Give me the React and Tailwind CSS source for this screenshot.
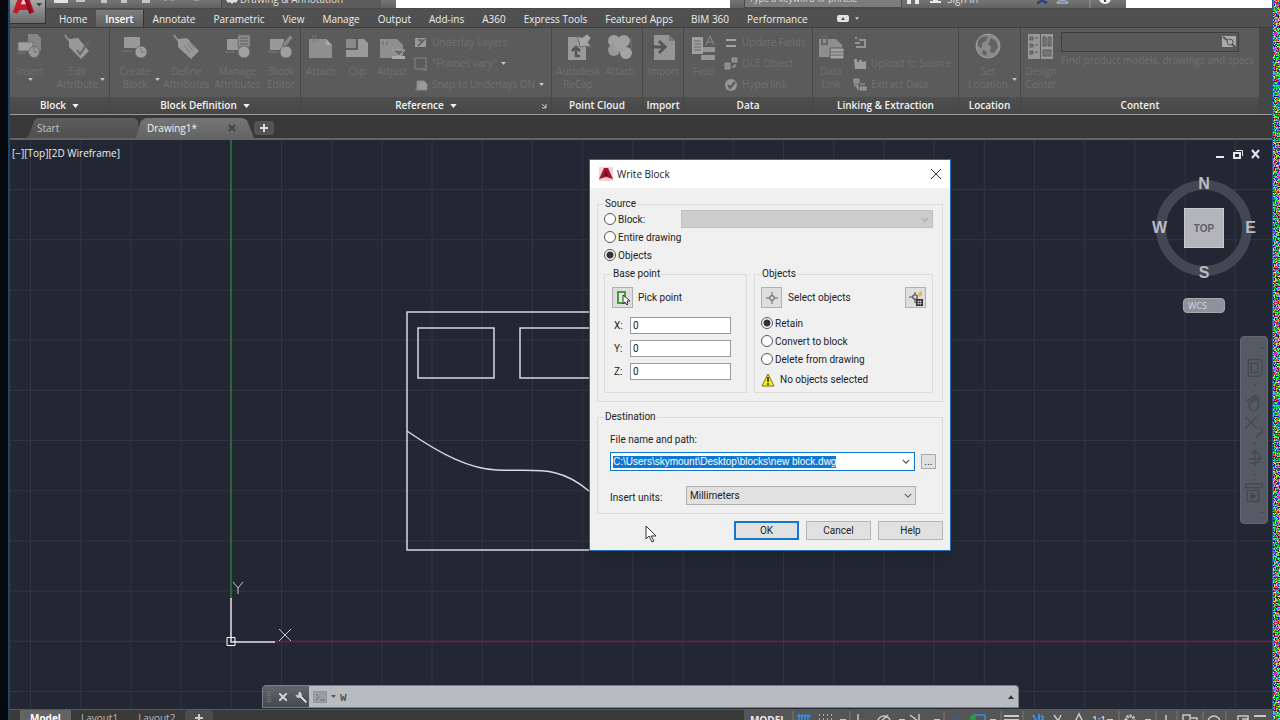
import React, { useEffect, useRef, useState } from "react";
import clsx from "clsx";

const MENU_TABS = [
  "Home",
  "Insert",
  "Annotate",
  "Parametric",
  "View",
  "Manage",
  "Output",
  "Add-ins",
  "A360",
  "Express Tools",
  "Featured Apps",
  "BIM 360",
  "Performance",
];

// Shapes of the large (28px) ribbon icons
const SHAPES = {
  insert: (
    <>
      <path d="M12 1h9l4 4v13H12z" fill="#858585" />
      <path d="M2 9h15v9H2z" fill="#a0a0a0" stroke="#6e6e6e" />
      <circle cx="18" cy="19" r="5.5" fill="#999" stroke="#6e6e6e" />
      <path d="M1 20h8M18 14v5h4" stroke="#777" fill="none" />
    </>
  ),
  editTag: (
    <>
      <path d="M1 2c2 4 3 4 5 6" stroke="#8c8c8c" strokeWidth="2" fill="none" />
      <path d="M5 6l9-1 11 13-8 8L5 14z" fill="#999" />
      <path d="M13 17l3 4 9-13" stroke="#666" strokeWidth="2" fill="none" />
    </>
  ),
  create: (
    <>
      <path d="M3 4h16v11H3z" fill="#999" />
      <circle cx="20" cy="19" r="6" fill="#a0a0a0" stroke="#6a6a6a" />
      <path d="M1 18h10M20 15v4h4" stroke="#7a7a7a" fill="none" />
    </>
  ),
  tag: (
    <>
      <path d="M1 2c2 4 3 4 5 6" stroke="#8c8c8c" strokeWidth="2" fill="none" />
      <path d="M5 6l9-1 12 13-8 8L5 14z" fill="#999" />
      <path d="M11 12l6 8M14 10l6 8M17 9l5 7" stroke="#777" />
    </>
  ),
  manage: (
    <>
      <path d="M3 6h12v11H3z" fill="#999" />
      <path d="M14 2h12v12H14z" fill="#8e8e8e" stroke="#6a6a6a" />
      <path d="M16 5h8M16 8h8M16 11h8" stroke="#5e5e5e" />
      <circle cx="20" cy="19" r="6" fill="#a0a0a0" stroke="#6a6a6a" />
      <path d="M1 19h10" stroke="#7a7a7a" />
    </>
  ),
  editor: (
    <>
      <path d="M3 6h14v11H3z" fill="#999" />
      <circle cx="19" cy="19" r="6" fill="#a0a0a0" stroke="#6a6a6a" />
      <path d="M15 12l8-10 3 3-8 9z" fill="#888" stroke="#666" />
      <path d="M1 19h10" stroke="#7a7a7a" />
    </>
  ),
  attach: (
    <>
      <path d="M2 6h17l6 6v13H2z" fill="#8f8f8f" />
      <path d="M19 6v6h6" fill="#aaa" />
      <path d="M6 10V2M9 10V2" stroke="#7c7c7c" />
    </>
  ),
  clip: (
    <>
      <path d="M3 6h10v9H3z" fill="#8a8a8a" />
      <path d="M15 6h6l4 4v14H3v-7h12z" fill="#9a9a9a" />
    </>
  ),
  adjust: (
    <>
      <path d="M2 6h17l6 6v13H2z" fill="#8f8f8f" />
      <path d="M5 8v4M9 8v4" stroke="#6a6a6a" />
      <path d="M14 17h13l-6 6z" fill="#6a6a6a" stroke="#aaa" />
      <path d="M14 23h13v3H14z" fill="#aaa" />
    </>
  ),
  recap: (
    <>
      <path d="M4 4h18v23H4z" fill="#9a9a9a" />
      <path d="M13 3l5 2 5-4 4 4-3 4 3 5-6-1-5 1-1-5z" fill="#a6a6a6" stroke="#6c6c6c" />
      <path d="M16 23h-4v-7M8 18l4-4 4 4" stroke="#555" strokeWidth="2.500" fill="none" />
    </>
  ),
  cloud: (
    <>
      <circle cx="8" cy="8" r="6" fill="#a0a0a0" />
      <circle cx="18" cy="8" r="6" fill="#a0a0a0" />
      <circle cx="8" cy="17" r="6" fill="#989898" />
      <circle cx="20" cy="20" r="6" fill="#a4a4a4" />
      <path d="M8 6h12v12H8z" fill="#a0a0a0" />
      <path d="M25 4v12" stroke="#777" />
    </>
  ),
  import: (
    <>
      <path d="M5 2h15l6 6v19H5z" fill="#959595" />
      <path d="M20 2v6h6" fill="#777" />
      <path d="M1 14h13M10 8l6 6-6 6" stroke="#555" strokeWidth="3" fill="none" />
    </>
  ),
  field: (
    <>
      <path d="M2 4h11v17H2z" fill="#a0a0a0" />
      <path d="M4 8h7M4 11h7M4 14h7M4 17h7" stroke="#666" />
      <path d="M16 12l4-9 4 9M17 9h6" stroke="#8a8a8a" fill="none" />
      <path d="M13 14h12v5H13zM11 22h14v5H11z" fill="#969696" />
    </>
  ),
  dataLink: (
    <>
      <path d="M2 6h17l6 6v12H2z" fill="#8f8f8f" />
      <path d="M5 11V4a3 3 0 0 1 5 0v7z" fill="none" stroke="#666" strokeWidth="2" />
      <path d="M13 15h14v11H13z" fill="#a4a4a4" stroke="#5a5a5a" />
      <path d="M13 19h14M13 22h14" stroke="#666" />
    </>
  ),
  globe: (
    <>
      <circle cx="14" cy="13" r="12" fill="#8a8a8a" stroke="#9c9c9c" />
      <path d="M5 6c4-3 7-3 9-2l-2 4-4 2v5l-3-1c-2-3-1-6 0-8zM17 5l5 3 2 6-4 6-4-1 1-5-3-3zM9 17l4 2-1 4-4-2z" fill="#626262" />
    </>
  ),
  design: (
    <>
      <path d="M1 1h12v25H1zM14 1h12v25H14z" fill="#979797" />
      <path d="M3 4h3v3H3zM8 5h3M3 11h3v3H3zM8 12h3M3 18h3v3H3zM8 19h3M16 4h3v9h-3zM21 4h3v9h-3zM16 17h8v6h-8z" fill="#777" stroke="#5c5c5c" />
    </>
  ),
};

// Small (14px) icons that stand before the ribbon's row commands
const ROW_SHAPES = {
  layers: (
    <>
      <path d="M1 2h11v9H1z" fill="#999" />
      <path d="M4 10l7-7M4 4h3v3" stroke="#5e5e5e" strokeWidth="1.500" fill="none" />
    </>
  ),
  frame: <path d="M1 1h11v11H1zM9 13h4" fill="none" stroke="#858585" />,
  snap: <path d="M3 3h7l3 3v6H3zM1 12h3" fill="#999" stroke="#888" />,
  update: <path d="M2 4h10M2 10h10" stroke="#a2a2a2" strokeWidth="2" />,
  ole: <path d="M1 6h5v6H1zM8 1h5v4H8zM8 10h3V7" fill="#8b8b8b" stroke="#999" />,
  hyper: (
    <>
      <circle cx="7" cy="7" r="6" fill="#979797" />
      <path d="M4 7l2 3 5-6" stroke="#5a5a5a" strokeWidth="2" fill="none" />
    </>
  ),
  download: <path d="M2 2h2M6 4h6v7H3M7 7H2" stroke="#959595" strokeWidth="2" fill="none" />,
  upload: <path d="M1 2h3v3h2V3h3v2l4-1v8H2z" fill="#9c9c9c" />,
  extract: <path d="M1 1h5v4H1zM1 7h4v5M7 6h5M7 9h6v3H7z" fill="#858585" stroke="#a0a0a0" />,
};

function Caret({ className }) {
  return (
    <svg viewBox="0 0 8 5" className={clsx("shrink-0", className)} fill="currentColor">
      <path d="M0 0h8L4 5z" />
    </svg>
  );
}

function Chevron({ className }) {
  return (
    <svg
      viewBox="0 0 10 6"
      className={clsx("w-2 h-[5px] pointer-events-none", className)}
      fill="none"
      stroke="currentColor"
      strokeWidth="1.500"
    >
      <path d="M1 1l4 4 4-4" />
    </svg>
  );
}

function BigButton({ icon, lines, className, caret }) {
  return (
    <button
      disabled
      className={clsx(
        "relative flex flex-col items-center shrink-0 pt-px text-[#707070] text-[10px] leading-[13px]",
        className
      )}
    >
      <svg viewBox="0 0 28 28" className="w-7 h-7 mb-1">
        {SHAPES[icon]}
      </svg>
      {lines.map((line) => (
        <span key={line} className="whitespace-nowrap">
          {line}
        </span>
      ))}
      {caret === "below" && <Caret className="w-[5px] h-[3px] text-[#c4c4c4]" />}
      {caret === "side" && (
        <Caret className="absolute right-0 bottom-4 w-[5px] h-[3px] text-[#c4c4c4]" />
      )}
    </button>
  );
}

function RowButton({ icon, label, caret }) {
  return (
    <button
      disabled
      aria-label={label || "Download"}
      className="flex items-center gap-1 h-[21px] text-[#707070] text-[10px] whitespace-nowrap"
    >
      <svg viewBox="0 0 14 14" className="w-[14px] h-[14px] shrink-0">
        {ROW_SHAPES[icon]}
      </svg>
      {label}
      {caret && <Caret className="w-[5px] h-[3px] text-[#c4c4c4]" />}
    </button>
  );
}

function Panel({ title, caret, launcher, className, children }) {
  return (
    <section
      className={clsx(
        "flex flex-col border-r border-[#464646] shadow-[inset_1px_0_0_#666] min-w-0",
        className
      )}
    >
      <div className="flex h-[69px] pt-1 bg-[#5b5b5b]">{children}</div>
      <div className="relative flex items-center justify-center gap-[6px] h-[17px] bg-linear-to-b from-[#4f4f4f] to-[#474747] text-[#f2f2f2] text-[10px] font-semibold whitespace-nowrap">
        {title}
        {caret && <Caret className="w-[7px] h-1" />}
        {launcher && (
          <svg viewBox="0 0 6 6" className="absolute right-1 w-[6px] h-[6px]" stroke="#ccc" fill="none">
            <path d="M1 1l4 4M5 1v4H1" />
          </svg>
        )}
      </div>
    </section>
  );
}

function TitleBar() {
  return (
    <header className="flex items-end h-2 overflow-hidden bg-linear-to-b from-[#757575] to-[#626262] text-[10px] leading-4 text-[#dedede]">
      <div className="flex items-end w-[211px] pl-11 h-2 shrink-0">
        <svg viewBox="0 0 160 8" className="w-40 h-2 shrink-0" fill="#e4e4e4">
          <path d="M0 0h14v3H0z" />
          <path d="M22 0h9v2h-9zM47 0h6v3h-6zM67 0h6v3h-6zM88 0h8v3h-8z" fill="#c4c4c4" />
          <path d="M110 0h3v1h-3zM117 0h3v1h-3zM140 0h5v1h-5z" fill="#999" />
        </svg>
      </div>
      <div className="flex items-end gap-[2px] w-[160px] h-2 shrink-0 border-l border-[#4a4a4a] bg-[#5c5c5c] pl-1">
        <svg viewBox="0 0 12 12" className="w-3 h-3 mb-1" fill="#ddd">
          <path d="M6 1l4 3 2 4-2 3-2-1-2 2-2-2-2 1-2-3 2-4z" />
        </svg>
        <span className="whitespace-nowrap mb-px">Drawing &amp; Annotation</span>
      </div>
      <div className="w-[5px] shrink-0" />
      <div className="w-[344px] h-2 pl-[10px] shrink">
        <div className="h-2 bg-white" />
      </div>
      <div className="w-[14px] shrink-0" />
      <div className="flex items-end w-[158px] h-2 shrink-0 bg-[#7c7c7c] border-b border-x border-[#4a4a4a] pl-1 text-[#d8d8d8]">
        <span className="text-[9px] whitespace-nowrap">Type a keyword or phrase</span>
      </div>
      <svg viewBox="0 0 45 8" className="w-[45px] h-2 shrink-0" fill="#e8e8e8">
        <path d="M5 0h4v4H5zM13 0h4v4h-4zM28 1h11v2H28zM31 0h5v1h-5z" />
      </svg>
      <span className="w-[90px] shrink-0 mb-px">Sign In</span>
      <svg viewBox="0 0 89 8" className="w-[89px] h-2 shrink-0">
        <path d="M0 3l9-5M1-2l9 5" stroke="#2c3e86" strokeWidth="3" />
        <path d="M20 3c0-3 11-3 11 0z" stroke="#c9d2e6" strokeWidth="1" fill="#4d5f9c" />
        <path d="M53 0v8" stroke="#999" />
        <circle cx="68" cy="-2" r="6" fill="#f1f1f1" />
        <path d="M68-3v5" stroke="#444" strokeWidth="2" />
      </svg>
      <div className="flex-1 h-2 bg-white" />
    </header>
  );
}

function MenuTabs() {
  return (
    <nav className="flex h-5 pt-px pl-10 bg-[#505050] border-t border-b border-t-[#494949] border-b-[#3d3d3d]">
      {MENU_TABS.map((tab) => (
        <button
          key={tab}
          className={clsx(
            "px-[9px] text-[10px] leading-[14px] whitespace-nowrap",
            tab === "Insert"
              ? "bg-linear-to-b from-[#7d7d7d] to-[#5f5f5f] border-r border-[#333] text-white font-semibold"
              : "text-[#eee]"
          )}
        >
          {tab}
        </button>
      ))}
      <button aria-label="Ribbon options" className="flex items-center gap-[6px] ml-5 text-[#d8d8d8]">
        <svg viewBox="0 0 12 7" className="w-3 h-[7px]">
          <rect width="12" height="7" rx="2" fill="#e0e0e0" />
          <path d="M4 5l2-3 2 3z" fill="#555" />
        </svg>
        <Caret className="w-1 h-[3px]" />
      </button>
    </nav>
  );
}

function Ribbon() {
  return (
    <div className="flex bg-[#464646] border-b border-[#9a9a9a]">
      <Panel title="Block" caret className="w-[100px] shrink-0">
        <BigButton icon="insert" lines={["Insert"]} caret="below" className="w-10" />
        <BigButton icon="editTag" lines={["Edit", "Attribute"]} caret="side" className="w-[55px]" />
      </Panel>
      <Panel title="Block Definition" caret className="w-[191px] shrink-0">
        <BigButton icon="create" lines={["Create", "Block"]} caret="side" className="w-[50px]" />
        <BigButton icon="tag" lines={["Define", "Attributes"]} className="w-[53px]" />
        <BigButton icon="manage" lines={["Manage", "Attributes"]} className="w-[49px]" />
        <BigButton icon="editor" lines={["Block", "Editor"]} className="w-[38px]" />
      </Panel>
      <Panel title="Reference" caret launcher className="w-[251px] shrink-0">
        <BigButton icon="attach" lines={["Attach"]} className="w-10" />
        <BigButton icon="clip" lines={["Clip"]} className="w-8" />
        <BigButton icon="adjust" lines={["Adjust"]} className="w-[38px]" />
        <div className="flex flex-col pl-[3px]">
          <RowButton icon="layers" label="Underlay Layers" />
          <RowButton icon="frame" label={'"Frames vary"'} caret />
          <RowButton icon="snap" label="Snap to Underlays ON" caret />
        </div>
      </Panel>
      <Panel title="Point Cloud" className="w-[91px] shrink-0">
        <BigButton icon="recap" lines={["Autodesk", "ReCap"]} className="w-[52px]" />
        <BigButton icon="cloud" lines={["Attach"]} className="w-8" />
      </Panel>
      <Panel title="Import" className="w-[41px] shrink-0">
        <BigButton icon="import" lines={["Import"]} className="w-10" />
      </Panel>
      <Panel title="Data" className="w-[129px] shrink-0">
        <BigButton icon="field" lines={["Field"]} className="w-10" />
        <div className="flex flex-col">
          <RowButton icon="update" label="Update Fields" />
          <RowButton icon="ole" label="OLE Object" />
          <RowButton icon="hyper" label="Hyperlink" />
        </div>
      </Panel>
      <Panel title="Linking & Extraction" className="w-[146px] shrink-0">
        <BigButton icon="dataLink" lines={["Data", "Link"]} className="w-9" />
        <div className="flex flex-col pl-1 overflow-hidden">
          <RowButton icon="download" label="" />
          <RowButton icon="upload" label="Upload to Source" />
          <RowButton icon="extract" label="Extract  Data" />
        </div>
      </Panel>
      <Panel title="Location" className="w-[62px] shrink-0">
        <BigButton icon="globe" lines={["Set", "Location"]} caret="side" className="w-[58px]" />
      </Panel>
      <Panel title="Content" className="flex-1 mr-3">
        <BigButton icon="design" lines={["Design", "Center"]} className="w-10" />
        <div className="flex-1 min-w-0 overflow-hidden text-[10px] text-[#707070]">
          <div className="flex items-center h-5 mr-5 border border-[#3f3f3f] bg-[#595959]">
            <input aria-label="Search content" disabled className="flex-1 min-w-0 h-full" />
            <svg viewBox="0 0 14 12" className="w-[14px] h-3 mr-[2px]">
              <path d="M0 0h14v11H0z" fill="#aaa" />
              <circle cx="8" cy="6" r="3" fill="none" stroke="#555" />
              <path d="M1 1l4 3M10 8l4 4" stroke="#555" strokeWidth="2" />
            </svg>
          </div>
          <p className="whitespace-nowrap leading-4">Find product models, drawings and specs</p>
        </div>
      </Panel>
    </div>
  );
}

function FileTabs() {
  return (
    <div className="flex items-end h-[25px] pl-4 bg-[#383838] border-b-2 border-[#636363] text-[10px]">
      <button className="h-5 w-[114px] pl-[11px] text-left text-[#c4c4c4] bg-linear-to-b from-[#5d5d5d] to-[#4e4e4e] [clip-path:polygon(0_100%,3%_80%,7%_15%,10%_0,94%_0,98%_10%,100%_100%)]">
        Start
      </button>
      <div className="flex items-center h-5 w-[118px] -ml-1 pl-[11px] pr-[18px] bg-linear-to-b from-[#757575] to-[#646464] [clip-path:polygon(0_100%,4%_15%,8%_0,90%_0,94%_10%,100%_100%)]">
        <button className="flex-1 text-left text-[#f4f4f4]">Drawing1*</button>
        <button aria-label="Close Drawing1" className="text-[#454545]">
          <svg viewBox="0 0 8 8" className="w-2 h-2" stroke="currentColor" strokeWidth="2">
            <path d="M1 1l6 6M7 1L1 7" />
          </svg>
        </button>
      </div>
      <button
        aria-label="New drawing"
        className="flex items-center justify-center w-5 h-[14px] mb-[3px] rounded bg-[#555] text-[#ddd]"
      >
        <svg viewBox="0 0 8 8" className="w-2 h-2" stroke="currentColor" strokeWidth="2">
          <path d="M4 0v8M0 4h8" />
        </svg>
      </button>
    </div>
  );
}

function Drawing() {
  return (
    <svg className="absolute inset-0 w-full h-full" fill="none">
      <defs>
        <pattern id="grid" x="20" y="49" width="50.2" height="50.2" patternUnits="userSpaceOnUse">
          <path d="M.5 0v51M0 .5h51" stroke="#2f3542" />
        </pattern>
      </defs>
      <rect width="100%" height="100%" fill="url(#grid)" />
      <path d="M221 0v460" stroke="#2c7a35" strokeWidth="1.500" />
      <path d="M265 501.500h1010" stroke="#7a1c42" strokeWidth="1.500" />
      <path d="M221 458v44h44" stroke="#e6e0ea" strokeWidth="1.500" />
      <path d="M217 497.500h8v8h-8z" stroke="#fff" />
      <path d="M223 442l5 6 5-6M228 448v6M269 489l12 12M281 489l-12 12" stroke="#c4c6cc" />
      <g stroke="#d5d9e2" strokeWidth="1.500">
        <path d="M590 172H397v238h193" />
        <path d="M408 188h76v50h-76zM590 188h-80v50h80" />
        <path d="M397 291C432 315 460 329 487 330c38 2 60-6 92 21" />
      </g>
    </svg>
  );
}

function ViewCube() {
  return (
    <div className="absolute top-[34px] right-4 flex flex-col items-center w-[104px]">
      <div className="relative grid grid-cols-3 grid-rows-3 place-items-center w-[104px] h-[108px] font-['Liberation_Sans',sans-serif] font-bold text-[16px] text-[#b9bcc4]">
        <svg viewBox="0 0 104 108" className="absolute inset-0 w-full h-full" fill="none">
          <circle cx="52" cy="54" r="43" stroke="#424753" strokeWidth="10" />
        </svg>
        <span className="relative col-start-2 self-start leading-5">N</span>
        <span className="relative row-start-2 col-start-1 justify-self-start">W</span>
        <button className="relative row-start-2 col-start-2 w-10 h-10 shrink-0 bg-[#b3b5ba] border border-[#c8cad0] text-[10px] text-[#5d6068]">
          TOP
        </button>
        <span className="relative row-start-2 col-start-3 justify-self-end">E</span>
        <span className="relative row-start-3 col-start-2 self-end leading-[18px]">S</span>
      </div>
      <button className="w-[42px] h-[15px] mt-4 pl-1 rounded bg-[#8f929b] border border-[#a5a8b0] text-left text-[9px] leading-3 text-[#d2d4da]">
        WCS
      </button>
    </div>
  );
}

function NavBar() {
  return (
    <div className="absolute right-1 top-[196px] w-7 h-[188px] rounded bg-[#565a65] border border-[#62666f]">
      <svg viewBox="0 0 28 188" className="w-full h-full" fill="none" stroke="#454852" strokeWidth="1.500">
        <path d="M8 18h12c4 0 4 16 0 18H8zM11 22h7v10h-7zM14 45h2" />
        <path d="M9 66l-3-4 3-1 3 4v-7h2v5-6h2v6l1-4 2 1v8c-1 6-8 7-10 2z" />
        <path d="M5 80l12 12M17 80L5 92M20 92a3 3 0 1 1 0 6l-4 4M14 108h2" />
        <path d="M8 125h14M15 115v18M11 119c5-3 10 1 9 6s-8 7-10 3M14 142h2" />
        <path d="M5 152h18v4H5zM7 159h12v12H7z" />
        <path d="M11 162l5 3-5 3z" fill="#3d404a" />
        <path d="M21 6h4M21 183h4" />
      </svg>
    </div>
  );
}

function Radio({ name, label, checked, onChange }) {
  return (
    <label className="flex items-center gap-[2px] h-[18px] whitespace-nowrap">
      <input
        type="radio"
        name={name}
        checked={checked}
        onChange={onChange}
        className="appearance-none w-3 h-3 shrink-0 rounded-full bg-white border border-[#555] checked:bg-[radial-gradient(circle,#333_0,#333_3px,#fff_4px)]"
      />
      {label}
    </label>
  );
}

function Group({ title, className, children }) {
  return (
    <fieldset className={clsx("min-w-0 border border-[#dcdcdc]", className)}>
      <legend className="px-px leading-3">{title}</legend>
      {children}
    </fieldset>
  );
}

function IconButton({ label, children }) {
  return (
    <button
      aria-label={label}
      className="flex items-center justify-center w-[21px] h-[21px] shrink-0 bg-[#dedede] border border-[#b0b0b0]"
    >
      <svg viewBox="0 0 16 16" className="w-4 h-4" fill="none">
        {children}
      </svg>
    </button>
  );
}

const ACTION_BUTTON = "w-[65px] h-[19px] bg-[#e1e1e1] border border-[#b5b5b5]";

function WriteBlockDialog() {
  const pathRef = useRef(null);
  const [source, setSource] = useState("Objects");
  const [mode, setMode] = useState("Retain");
  const [point, setPoint] = useState({ X: "0", Y: "0", Z: "0" });

  useEffect(() => {
    pathRef.current.focus();
    pathRef.current.select();
  }, []);

  return (
    <div
      role="dialog"
      aria-label="Write Block"
      className="absolute left-[579px] top-[19px] w-[362px] bg-[#f0f0f0] border border-[#2a6db0] shadow-lg font-['Roboto',sans-serif] text-[10px] text-[#222]"
    >
      <div className="flex items-center gap-1 h-7 pl-[9px] pr-[9px] bg-white font-['Open_Sans',sans-serif]">
        <svg viewBox="0 0 14 14" className="w-[14px] h-[14px]">
          <rect width="14" height="14" fill="#f3d3d3" />
          <path d="M0 12L5 1h4l5 11-7-2z" fill="#a4142a" />
          <path d="M7 3l2 6H5z" fill="#6c0b1a" />
        </svg>
        <span className="flex-1">Write Block</span>
        <button aria-label="Close">
          <svg viewBox="0 0 10 10" className="w-[10px] h-[10px]" stroke="#333">
            <path d="M0 0l10 10M10 0L0 10" />
          </svg>
        </button>
      </div>

      <div className="px-[7px] pt-[10px] pb-[10px]">
        <Group title="Source" className="px-[6px] pb-2">
          <div className="flex">
            <div className="w-[77px]">
              {["Block:", "Entire drawing", "Objects"].map((item) => (
                <Radio
                  key={item}
                  name="source"
                  label={item}
                  checked={source === item}
                  onChange={() => setSource(item)}
                />
              ))}
            </div>
            <div className="relative flex-1 mr-[3px]">
              <select
                aria-label="Block name"
                disabled
                className="appearance-none block w-full h-[18px] bg-[#ccc] border border-[#c0c0c0] opacity-100"
              />
              <Chevron className="absolute right-1 top-[7px] text-[#aaa]" />
            </div>
          </div>

          <div className="flex gap-[7px] mt-1 mr-[3px]">
            <Group title="Base point" className="w-[143px] h-[125px] pl-[7px]">
              <div className="flex items-center gap-[5px] mt-[7px]">
                <IconButton label="Pick point">
                  <path d="M3 2h7v11H3z" fill="#dff0d8" stroke="#4d9a3d" strokeWidth="2" />
                  <path d="M8 5v9l2-2 2 3 1-1-1-3h3z" fill="#fff" stroke="#333" />
                </IconButton>
                Pick point
              </div>
              <div className="flex flex-col gap-[6px] mt-[9px]">
                {["X", "Y", "Z"].map((axis) => (
                  <label key={axis} className="flex items-center h-[17px]">
                    <span className="w-[18px] pl-[2px]">{axis}:</span>
                    <input
                      value={point[axis]}
                      onChange={(e) => setPoint({ ...point, [axis]: e.target.value })}
                      className="w-[101px] h-[17px] px-[2px] bg-white border border-[#999]"
                    />
                  </label>
                ))}
              </div>
            </Group>

            <Group title="Objects" className="flex-1 h-[125px] px-[6px]">
              <div className="flex items-center gap-[6px] mt-[7px]">
                <IconButton label="Select objects">
                  <path d="M8 2v12M2 8h12" stroke="#666" />
                  <path d="M6 6h4v4H6z" fill="#ddd" stroke="#666" />
                </IconButton>
                <span className="flex-1">Select objects</span>
                <IconButton label="Quick select">
                  <path d="M7 2v11M1 7h9" stroke="#444" />
                  <path d="M5 5h4v4H5z" fill="#ddd" stroke="#444" />
                  <path d="M10 3l4-2v4l-3 2z" fill="#e3b93c" />
                  <path d="M8 9h7v7H8z" fill="#333" />
                  <path d="M9 11.500h5M9 13.500h5M10.500 10v5M12.500 10v5" stroke="#ccc" strokeWidth=".6" />
                </IconButton>
              </div>
              <div className="mt-[6px]">
                {["Retain", "Convert to block", "Delete from drawing"].map((item) => (
                  <Radio
                    key={item}
                    name="mode"
                    label={item}
                    checked={mode === item}
                    onChange={() => setMode(item)}
                  />
                ))}
              </div>
              <p className="flex items-center gap-[5px] mt-1">
                <svg viewBox="0 0 14 14" className="w-[14px] h-[14px]">
                  <path d="M7 1l6 12H1z" fill="#f4ee1c" stroke="#77730f" strokeLinejoin="round" />
                  <path d="M7 4v5M7 10v2" stroke="#222" strokeWidth="1.500" />
                </svg>
                No objects selected
              </p>
            </Group>
          </div>
        </Group>

        <Group title="Destination" className="mt-[9px] px-[6px] pb-2">
          <label htmlFor="path" className="block mt-[10px] pl-[6px] leading-[14px]">
            File name and path:
          </label>
          <div className="flex items-center gap-[6px] mt-[5px] pl-[6px]">
            <div className="flex items-center w-[306px] h-[19px] pl-[2px] pr-1 bg-white border border-[#0f78cf]">
              <input
                id="path"
                ref={pathRef}
                defaultValue="C:\Users\skymount\Desktop\blocks\new block.dwg"
                className="flex-1 min-w-0 h-3 leading-3 outline-none font-['Liberation_Sans',sans-serif] selection:bg-[#0f78d4] selection:text-white"
              />
              <button aria-label="Recent paths" className="text-[#555]">
                <Chevron />
              </button>
            </div>
            <button aria-label="Browse" className="w-[15px] h-[15px] bg-[#e1e1e1] border border-[#aaa] leading-[10px]">
              ...
            </button>
          </div>
          <div className="flex items-center mt-[15px] pl-[6px]">
            <label htmlFor="units" className="w-[76px] pt-1">
              Insert units:
            </label>
            <div className="relative w-[230px]">
              <select
                id="units"
                className="appearance-none block w-full h-[19px] pl-[3px] bg-[#e1e1e1] border border-[#b0b0b0]"
              >
                <option>Millimeters</option>
              </select>
              <Chevron className="absolute right-1 top-[7px] text-[#666]" />
            </div>
          </div>
        </Group>

        <div className="flex justify-end gap-[7px] mt-[7px]">
          <button className="w-[65px] h-[19px] bg-[#e1e1e1] border-2 border-[#0f78cf]">OK</button>
          <button className={ACTION_BUTTON}>Cancel</button>
          <button className={ACTION_BUTTON}>Help</button>
        </div>
      </div>
    </div>
  );
}

function CommandLine() {
  return (
    <div className="absolute bottom-px left-[252px] right-[253px] flex h-[23px] rounded-t border border-[#7c7f85] bg-[#b8bbc0]">
      <div className="flex items-center gap-2 w-[46px] shrink-0 pl-1 bg-linear-to-b from-[#62656c] to-[#46494e] text-[#d0d0d0]">
        <svg viewBox="0 0 4 12" className="w-1 h-3 shrink-0" stroke="#8e9197" strokeDasharray="1 1">
          <path d="M1 0v12M3 0v12" />
        </svg>
        <button aria-label="Close command line" className="shrink-0">
          <svg viewBox="0 0 8 8" className="w-2 h-2" stroke="currentColor" strokeWidth="2">
            <path d="M0 0l8 8M8 0L0 8" />
          </svg>
        </button>
        <button aria-label="Customize" className="shrink-0">
          <svg viewBox="0 0 12 12" className="w-3 h-3">
            <path d="M1 4c1 3 3 3 4 2l5 5c1 1 2 0 1-1L6 5c1-1 0-4-2-4v3L3 5z" fill="currentColor" stroke="currentColor" />
          </svg>
        </button>
      </div>
      <div className="flex flex-1 items-center gap-1 pl-1 pr-1 font-['Liberation_Mono',monospace] text-[11px] text-[#555]">
        <svg viewBox="0 0 14 12" className="w-[14px] h-3 shrink-0" fill="none" stroke="#6e7278">
          <path d="M.5.500h13v11H.5z" fill="#9a9da5" stroke="#92959c" />
          <path d="M3 3l3 3-3 3M7 9h5" />
        </svg>
        <Caret className="w-[5px] h-[3px]" />
        <input
          aria-label="Command"
          defaultValue="W"
          className="flex-1 min-w-0 h-4 pt-[2px] leading-[14px] font-bold outline-none"
        />
        <button aria-label="Command history" className="rotate-180 text-[#333]">
          <Caret className="w-[6px] h-1" />
        </button>
      </div>
    </div>
  );
}

function Canvas() {
  return (
    <main className="relative flex-1 min-h-0 overflow-hidden bg-[#232733]">
      <Drawing />
      <div className="relative flex items-center justify-between pl-[2px] pr-3 pt-[6px] text-[10px] text-[#eceef2]">
        <span>[−][Top][2D Wireframe]</span>
        <svg viewBox="0 0 46 12" className="w-[46px] h-3" fill="none" stroke="#e8e8ec" strokeWidth="2">
          <path d="M2 9h8" />
          <path d="M20 5h6v5h-6z" />
          <path d="M22 2.500h6.500V8" strokeWidth="1" />
          <path d="M38 2l7 8M45 2l-7 8" />
        </svg>
      </div>
      <ViewCube />
      <NavBar />
      <CommandLine />
      <WriteBlockDialog />
      <svg viewBox="0 0 12 18" className="absolute left-[635px] top-[385px] w-3 h-[18px]">
        <path d="M1 1v13l3-3 3 6 2-1-3-5h5z" fill="#fff" stroke="#333" />
      </svg>
    </main>
  );
}

const LAYOUT_TAB = "h-4 px-[10px] leading-[14px] text-[#bbb]";

function StatusBar() {
  return (
    <footer className="flex items-start justify-between h-[11px] overflow-hidden bg-[#3a3a3a] border-t border-[#5a5a5a] text-[10px]">
      <div className="flex pl-[10px]">
        <button className="h-4 px-[10px] leading-[14px] font-bold text-white bg-[#636363]">Model</button>
        <button className={LAYOUT_TAB}>Layout1</button>
        <button className={LAYOUT_TAB}>Layout2</button>
        <button aria-label="New layout" className="flex justify-center w-7 h-4 pt-1 bg-[#4c4c4c] rounded text-[#ccc]">
          <svg viewBox="0 0 8 8" className="w-2 h-2" stroke="currentColor" strokeWidth="2">
            <path d="M4 0v8M0 4h8" />
          </svg>
        </button>
      </div>
      <div className="flex items-start h-4 bg-[#555] text-[#e8e8e8]">
        <button className="px-[6px] leading-5 font-bold">MODEL</button>
        <svg viewBox="790 0 300 12" className="w-[300px] h-3 shrink-0" fill="none" stroke="#c8c8c8" strokeWidth="1.500">
          <path d="M797 4v8M800 4v8M803 4v8M806 4v8M795 6h14" stroke="#3a8de0" />
          <path d="M817 5h14M817 9h14" strokeDasharray="1 3" />
          <path d="M856 4v8M876 11a6 5 0 0 1 12 0M878 12l8-7M908 5l8 6M917 4v8" />
          <path d="M838 10h6M897 10h6M932 10h6M988 10h6" strokeWidth="2" />
          <path d="M951 11l7-5" stroke="#31639e" />
          <path d="M971 5h12v6" stroke="#3a8de0" />
          <circle cx="971" cy="8" r="3" fill="#2b9a3f" stroke="none" />
          <path d="M1002 6h15M1002 10h15" strokeWidth="2" />
          <path d="M1031 5l4 7M1037 4v8M1039 7c3-3 3 4-1 4" stroke="#3a8de0" strokeWidth="2" />
          <path d="M1052 5l5 7M1059 5l-3 6M1073 12l4-8 4 8" />
          <path d="M791 1v11M848 1v11M942 1v11M999 1v11M1021 1v11" stroke="#7a7a7a" strokeWidth="1" />
        </svg>
        <span className="leading-5">1:1</span>
        <svg viewBox="1105 0 166 12" className="w-[166px] h-3 shrink-0" fill="none" stroke="#c8c8c8" strokeWidth="1.500">
          <path d="M1106 10h6M1144 10h6" strokeWidth="2" />
          <circle cx="1129" cy="10" r="4" strokeWidth="3" strokeDasharray="2 1" />
          <path d="M1165 5v7M1182 5h7v6h-7zM1190 8h6v4M1237 6h10v6h-10zM1241 9h5v3" />
          <path d="M1207 12a6 6 0 0 1 12 0" />
          <path d="M1253 6h12M1255 11h9" strokeWidth="2" />
          <path d="M1118 1v11M1155 1v11M1176 1v11M1202 1v11M1225 1v11" stroke="#7a7a7a" strokeWidth="1" />
        </svg>
      </div>
    </footer>
  );
}

export default function App() {
  return (
    <div className="flex h-screen overflow-hidden bg-[#07080d] font-['Open_Sans',sans-serif]">
      <div className="w-2 shrink-0" />
      <div className="relative flex flex-col flex-1 min-w-0 border-l-2 border-r border-l-[#1d4766] border-r-[#2a5587]">
        <TitleBar />
        <MenuTabs />
        <button
          aria-label="Application menu"
          className="absolute left-0 top-0 flex items-start w-9 h-6 bg-linear-to-b from-[#a8a8a8] to-[#6a6a6a] border-r border-b border-[#333]"
        >
          <svg viewBox="0 0 36 23" className="w-full h-full">
            <path d="M3 12L9-4h10l6 16-5 2-2-4H10l-3 4z" fill="#c4182c" />
            <path d="M11 4l3-6 3 6z" fill="#f4d6d8" />
            <path d="M17-3l7 15-4 2-6-17z" fill="#8e0e20" />
            <path d="M27 3h6l-3 3z" fill="#333" />
          </svg>
        </button>
        <Ribbon />
        <FileTabs />
        <Canvas />
        <StatusBar />
      </div>
      <svg className="w-[7px] h-full shrink-0 bg-[#333]">
        <filter id="static" x="0" y="0" width="100%" height="100%" colorInterpolationFilters="sRGB">
          <feTurbulence type="fractalNoise" baseFrequency="0.8" numOctaves="2" seed="4" />
          <feColorMatrix values="4 0 0 0 -1.600  0 4 0 0 -1.500  0 0 4 0 -1.600  0 0 0 0 1" />
        </filter>
        <rect width="100%" height="100%" filter="url(#static)" />
      </svg>
    </div>
  );
}
